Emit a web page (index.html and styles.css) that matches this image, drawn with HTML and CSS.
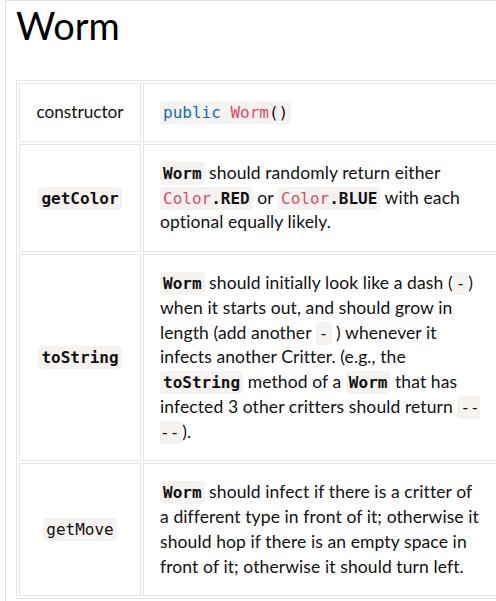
FILE: index.html
```html
<!DOCTYPE html>
<html lang="en">
<head>
<meta charset="utf-8">
<title>Worm</title>
<link rel="stylesheet" href="styles.css">
</head>
<body>
<div class="page">
  <h1 class="title">Worm</h1>
  <table class="spec">
    <tr>
      <td class="name">constructor</td>
      <td class="desc"><code><span class="kw">public</span> <span class="fn">Worm</span>()</code></td>
    </tr>
    <tr>
      <td class="name"><code class="b">getColor</code></td>
      <td class="desc"><code class="b">Worm</code> should randomly return either <code><span class="fn">Color</span><span class="b">.RED</span></code> or <code><span class="fn">Color</span><span class="b">.BLUE</span></code> with each optional equally likely.</td>
    </tr>
    <tr>
      <td class="name"><code class="b">toString</code></td>
      <td class="desc"><code class="b">Worm</code> should initially look like a dash (<code>-</code>) when it starts out, and should grow in length (add another <code>-</code> ) whenever it infects another Critter. (e.g., the <code class="b">toString</code> method of a <code class="b">Worm</code> that has infected 3 other critters should return <code><span class="nw">--</span> <span class="nw">--</span></code>).</td>
    </tr>
    <tr>
      <td class="name"><code>getMove</code></td>
      <td class="desc"><code class="b">Worm</code> should infect if there is a critter of a different type in front of it; otherwise it should hop if there is an empty space in front of it; otherwise it should turn left.</td>
    </tr>
  </table>
</div>
</body>
</html>
```
FILE: styles.css
```css
html {
  overflow: hidden;
}
body {
  margin: 0;
  font-family: Lato, "Noto Sans", sans-serif;
  color: #111;
}
.page {
  margin-left: 5px;
  width: 520px;
  border-top: 1px solid #dfe1e4;
  border-left: 1px solid #dfe1e4;
  padding: 0 10px 4px 10px;
}
.title {
  margin: 0;
  padding-top: 2px;
  height: 77px;
  font-size: 38px;
  line-height: 44px;
  font-weight: 400;
  color: #000;
}
.spec {
  border: 1px solid #e3e6ea;
  border-spacing: 2px;
  font-size: 17.5px;
  letter-spacing: 0.1px;
  line-height: 24.75px;
}
.spec td {
  border: 1px solid #e3e6ea;
  padding: 16px;
  vertical-align: middle;
}
.name {
  width: 88px;
  text-align: center;
  white-space: nowrap;
  letter-spacing: 0;
  font-size: 17.2px;
}
.desc {
  width: 324px;
}
code {
  font-family: "DejaVu Sans Mono", monospace;
  font-size: 16px;
  line-height: 1;
  letter-spacing: 0;
  background: #f5f2f0;
  border-radius: 4px;
  padding: 2px 3px;
  color: #111;
}
.nw {
  white-space: nowrap;
}
.b {
  font-weight: 600;
}
.kw {
  color: #0b72a8;
}
.fn {
  color: #dd4a68;
}
```
